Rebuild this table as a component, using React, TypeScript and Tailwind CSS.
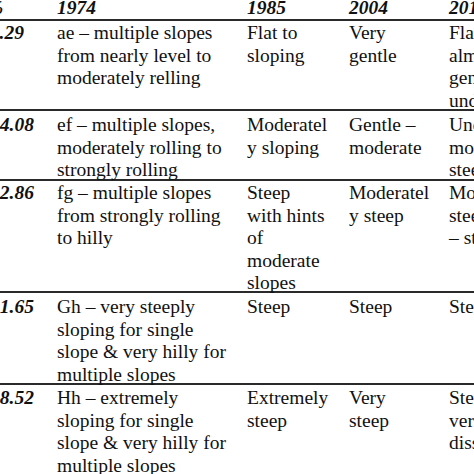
const header = ['%', '1974', '1985', '2004', '2019'];

const rows: { pad: string; h: string; num: string; numPad: string; cells: string[][] }[] = [
  {
    pad: 'pt-[1px]',
    h: 'h-[90px]',
    num: '24.29',
    numPad: 'pl-0',
    cells: [
      ['ae – multiple slopes', 'from nearly level to', 'moderately relling'],
      ['Flat to', 'sloping'],
      ['Very', 'gentle'],
      ['Flat to', 'almost', 'gentle', 'undulating'],
    ],
  },
  {
    pad: 'pt-[3px]',
    h: 'h-[70px]',
    num: '14.08',
    numPad: 'pl-[10px]',
    cells: [
      ['ef – multiple slopes,', 'moderately rolling to', 'strongly rolling'],
      ['Moderatel', 'y sloping'],
      ['Gentle –', 'moderate'],
      ['Undulating', 'moderately', 'steep'],
    ],
  },
  {
    pad: 'pt-[1px]',
    h: 'h-[112px]',
    num: '32.86',
    numPad: 'pl-[10px]',
    cells: [
      ['fg – multiple slopes', 'from strongly rolling', 'to hilly'],
      ['Steep', 'with hints', 'of', 'moderate', 'slopes'],
      ['Moderatel', 'y steep'],
      ['Moderately', 'steep', '– steep'],
    ],
  },
  {
    pad: 'pt-[3px]',
    h: 'h-[92px]',
    num: '21.65',
    numPad: 'pl-[10px]',
    cells: [
      ['Gh – very steeply', 'sloping for single', 'slope & very hilly for', 'multiple slopes'],
      ['Steep'],
      ['Steep'],
      ['Steep'],
    ],
  },
  {
    pad: 'pt-[2px]',
    h: 'h-[100px]',
    num: '18.52',
    numPad: 'pl-[10px]',
    cells: [
      ['Hh – extremely', 'sloping for single', 'slope & very hilly for', 'multiple slopes'],
      ['Extremely', 'steep'],
      ['Very', 'steep'],
      ['Steep', 'very', 'dissected'],
    ],
  },
];

const widths = ['w-[77px]', 'w-[190px]', 'w-[102px]', 'w-[100px]', 'w-[120px]'];

function Lines({ lines }: { lines: string[] }) {
  return (
    <>
      {lines.map((l, i) => (
        <div key={i} className="whitespace-nowrap">
          {l}
        </div>
      ))}
    </>
  );
}

export default function App() {
  return (
    <div className="w-[474px] h-[474px] overflow-hidden bg-white text-[#111] font-['Liberation_Serif',serif] text-[19.5px] leading-[22.5px]">
      <div className="ml-[-20px] mt-[-3px] w-[600px]">
        {/* Header */}
        <div className="flex h-[22px] font-bold italic">
          {header.map((h, i) => (
            <div key={h} className={`${widths[i]} shrink-0 ${i === 0 ? 'pl-[7px]' : ''}`}>
              {h}
            </div>
          ))}
        </div>

        {rows.map((r) => (
          <div key={r.num} className={`flex border-t-2 border-[#2a2a2a] ${r.h} ${r.pad}`}>
            <div className={`${widths[0]} shrink-0 font-bold italic ${r.numPad}`}>{r.num}</div>
            {r.cells.map((c, i) => (
              <div key={i} className={`${widths[i + 1]} shrink-0`}>
                <Lines lines={c} />
              </div>
            ))}
          </div>
        ))}
      </div>
    </div>
  );
}
